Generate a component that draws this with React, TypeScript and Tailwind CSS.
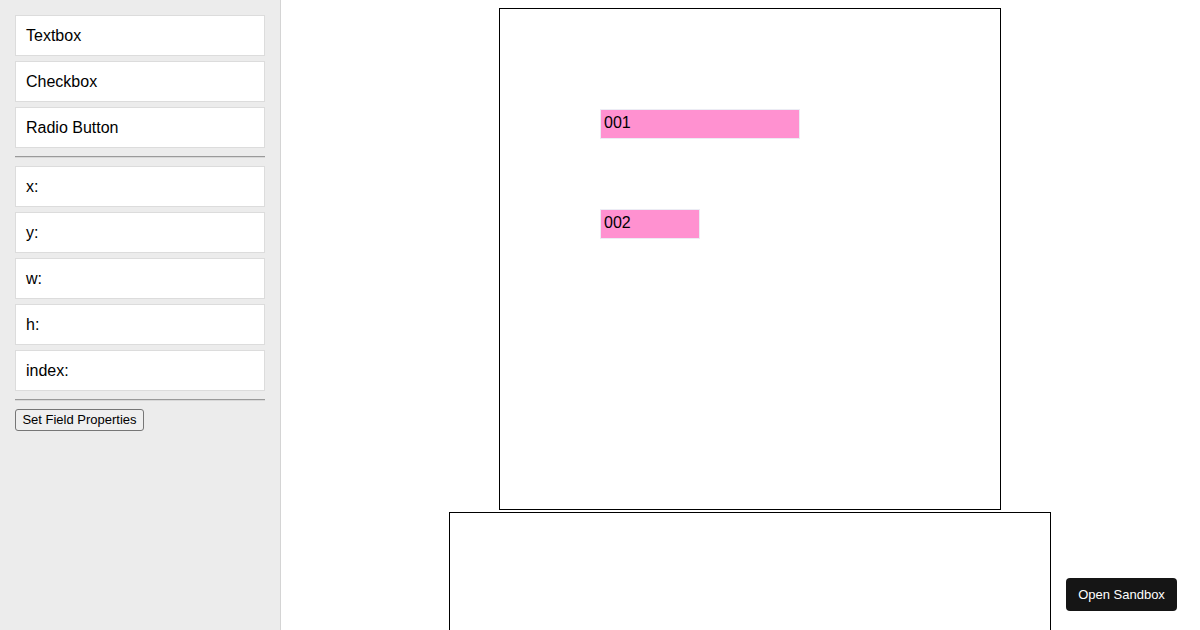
import React from "react";

const font = { fontFamily: '"Liberation Sans", Arial, sans-serif' };

function Item({ label }: { label: string }) {
  return (
    <div className="h-[41px] border border-[#dcdcdc] bg-white px-[10px] flex items-center text-[16px] text-black">
      {label}
    </div>
  );
}

function Rule() {
  return <div className="w-[250px] h-[2px] border-t border-b border-t-[#9a9a9a] border-b-[#d8d8d8] my-[8px]" />;
}

export default function App() {
  return (
    <div className="flex h-[630px] w-[1200px] overflow-hidden bg-white" style={font}>
      <aside className="w-[281px] shrink-0 h-full bg-[#ececec] border-r border-[#d4d4d4] pt-[15px] pl-[15px] pr-[15px]">
        <div className="w-[250px] flex flex-col gap-[5px]">
          <Item label="Textbox" />
          <Item label="Checkbox" />
          <Item label="Radio Button" />
        </div>
        <Rule />
        <div className="w-[250px] flex flex-col gap-[5px]">
          <Item label="x:" />
          <Item label="y:" />
          <Item label="w:" />
          <Item label="h:" />
          <Item label="index:" />
        </div>
        <Rule />
        <button className="h-[22px] w-[129px] pb-[2px] text-[13px] text-black bg-[#efefef] border border-[#767676] rounded-[3px] leading-none flex items-center justify-center">
          Set Field Properties
        </button>
      </aside>
      <main className="flex-1 flex flex-col items-center pt-[8px] pl-[19px]">
        <div className="relative w-[502px] h-[502px] shrink-0 border border-black bg-white">
          <div className="absolute left-[100px] top-[100px] w-[200px] h-[30px] bg-[#ff91d0] border border-[#ececf4] pl-[3px] pb-[2px] flex items-center text-[16px] text-black">
            001
          </div>
          <div className="absolute left-[100px] top-[200px] w-[100px] h-[30px] bg-[#ff91d0] border border-[#ececf4] pl-[3px] pb-[2px] flex items-center text-[16px] text-black">
            002
          </div>
        </div>
        <div className="mt-[2px] w-[602px] h-[200px] shrink-0 border border-black bg-white" />
      </main>
      <button className="fixed right-[23px] bottom-[19px] h-[33px] w-[111px] rounded-[4px] bg-[#151515] text-white text-[13px] flex items-center justify-center">
        Open Sandbox
      </button>
    </div>
  );
}
